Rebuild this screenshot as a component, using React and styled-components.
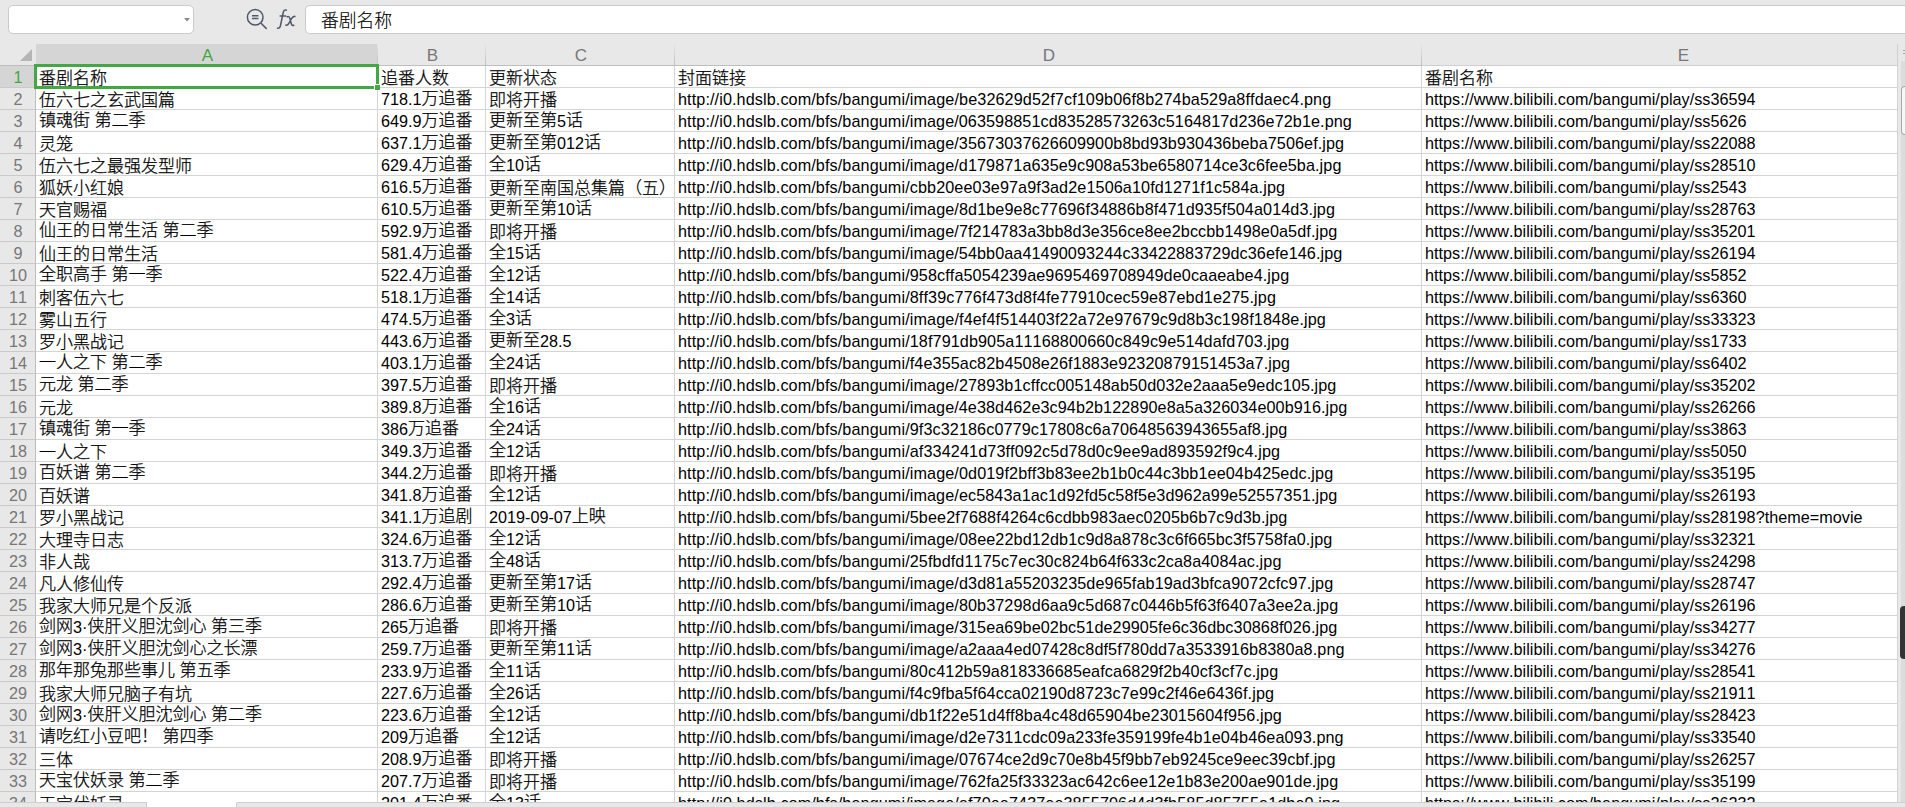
import React from "react";
import styled, { createGlobalStyle } from "styled-components";

const GRID = "#d4d4d4";
const CHROME = "#e8e8e8";
const GREEN = "#43a843";

const HEADERS = ["番剧名称", "追番人数", "更新状态", "封面链接", "番剧名称"];
const IMG = "http://i0.hdslb.com/bfs/bangumi/";
const PLAY = "https://www.bilibili.com/bangumi/play/";

const DATA = [
  ["伍六七之玄武国篇", "718.1万追番", "即将开播", "image/be32629d52f7cf109b06f8b274ba529a8ffdaec4.png", "ss36594"],
  ["镇魂街 第二季", "649.9万追番", "更新至第5话", "image/063598851cd83528573263c5164817d236e72b1e.png", "ss5626"],
  ["灵笼", "637.1万追番", "更新至第012话", "image/35673037626609900b8bd93b930436beba7506ef.jpg", "ss22088"],
  ["伍六七之最强发型师", "629.4万追番", "全10话", "image/d179871a635e9c908a53be6580714ce3c6fee5ba.jpg", "ss28510"],
  ["狐妖小红娘", "616.5万追番", "更新至南国总集篇（五）", "cbb20ee03e97a9f3ad2e1506a10fd1271f1c584a.jpg", "ss2543"],
  ["天官赐福", "610.5万追番", "更新至第10话", "image/8d1be9e8c77696f34886b8f471d935f504a014d3.jpg", "ss28763"],
  ["仙王的日常生活 第二季", "592.9万追番", "即将开播", "image/7f214783a3bb8d3e356ce8ee2bccbb1498e0a5df.jpg", "ss35201"],
  ["仙王的日常生活", "581.4万追番", "全15话", "image/54bb0aa41490093244c33422883729dc36efe146.jpg", "ss26194"],
  ["全职高手 第一季", "522.4万追番", "全12话", "958cffa5054239ae9695469708949de0caaeabe4.jpg", "ss5852"],
  ["刺客伍六七", "518.1万追番", "全14话", "8ff39c776f473d8f4fe77910cec59e87ebd1e275.jpg", "ss6360"],
  ["雾山五行", "474.5万追番", "全3话", "image/f4ef4f514403f22a72e97679c9d8b3c198f1848e.jpg", "ss33323"],
  ["罗小黑战记", "443.6万追番", "更新至28.5", "18f791db905a11168800660c849c9e514dafd703.jpg", "ss1733"],
  ["一人之下 第二季", "403.1万追番", "全24话", "f4e355ac82b4508e26f1883e92320879151453a7.jpg", "ss6402"],
  ["元龙 第二季", "397.5万追番", "即将开播", "image/27893b1cffcc005148ab50d032e2aaa5e9edc105.jpg", "ss35202"],
  ["元龙", "389.8万追番", "全16话", "image/4e38d462e3c94b2b122890e8a5a326034e00b916.jpg", "ss26266"],
  ["镇魂街 第一季", "386万追番", "全24话", "9f3c32186c0779c17808c6a70648563943655af8.jpg", "ss3863"],
  ["一人之下", "349.3万追番", "全12话", "af334241d73ff092c5d78d0c9ee9ad893592f9c4.jpg", "ss5050"],
  ["百妖谱 第二季", "344.2万追番", "即将开播", "image/0d019f2bff3b83ee2b1b0c44c3bb1ee04b425edc.jpg", "ss35195"],
  ["百妖谱", "341.8万追番", "全12话", "image/ec5843a1ac1d92fd5c58f5e3d962a99e52557351.jpg", "ss26193"],
  ["罗小黑战记", "341.1万追剧", "2019-09-07上映", "5bee2f7688f4264c6cdbb983aec0205b6b7c9d3b.jpg", "ss28198?theme=movie"],
  ["大理寺日志", "324.6万追番", "全12话", "image/08ee22bd12db1c9d8a878c3c6f665bc3f5758fa0.jpg", "ss32321"],
  ["非人哉", "313.7万追番", "全48话", "25fbdfd1175c7ec30c824b64f633c2ca8a4084ac.jpg", "ss24298"],
  ["凡人修仙传", "292.4万追番", "更新至第17话", "image/d3d81a55203235de965fab19ad3bfca9072cfc97.jpg", "ss28747"],
  ["我家大师兄是个反派", "286.6万追番", "更新至第10话", "image/80b37298d6aa9c5d687c0446b5f63f6407a3ee2a.jpg", "ss26196"],
  ["剑网3·侠肝义胆沈剑心 第三季", "265万追番", "即将开播", "image/315ea69be02bc51de29905fe6c36dbc30868f026.jpg", "ss34277"],
  ["剑网3·侠肝义胆沈剑心之长漂", "259.7万追番", "更新至第11话", "image/a2aaa4ed07428c8df5f780dd7a3533916b8380a8.png", "ss34276"],
  ["那年那兔那些事儿 第五季", "233.9万追番", "全11话", "80c412b59a818336685eafca6829f2b40cf3cf7c.jpg", "ss28541"],
  ["我家大师兄脑子有坑", "227.6万追番", "全26话", "f4c9fba5f64cca02190d8723c7e99c2f46e6436f.jpg", "ss21911"],
  ["剑网3·侠肝义胆沈剑心 第二季", "223.6万追番", "全12话", "db1f22e51d4ff8ba4c48d65904be23015604f956.jpg", "ss28423"],
  ["请吃红小豆吧！ 第四季", "209万追番", "全12话", "image/d2e7311cdc09a233fe359199fe4b1e04b46ea093.png", "ss33540"],
  ["三体", "208.9万追番", "即将开播", "image/07674ce2d9c70e8b45f9bb7eb9245ce9eec39cbf.jpg", "ss26257"],
  ["天宝伏妖录 第二季", "207.7万追番", "即将开播", "image/762fa25f33323ac642c6ee12e1b83e200ae901de.jpg", "ss35199"],
  ["天宝伏妖录", "201.4万追番", "全13话", "image/af70ee7437ee3855706d4d3fb585d85755a1dbe0.jpg", "ss26232"],
];

const ROWS = [HEADERS, ...DATA.map(([a, b, c, d, e]) => [a, b, c, IMG + d, PLAY + e])];

const Global = createGlobalStyle`
  html, body { margin: 0; background: ${CHROME}; overflow: hidden; }
  *, *::before, *::after { box-sizing: border-box; }
`;

const Window = styled.div`
  position: relative;
  width: 1905px;
  height: 807px;
  display: flex;
  flex-direction: column;
  overflow: hidden;
  background: ${CHROME};
  font-family: "Liberation Sans", "Noto Sans CJK SC", sans-serif;
  font-kerning: none;
`;

const FormulaBar = styled.div`
  height: 44px;
  flex: none;
  display: flex;
  align-items: flex-start;
  padding: 5px 0 0 8px;
`;

const NameBox = styled.div`
  width: 186px;
  height: 29px;
  display: flex;
  align-items: center;
  justify-content: flex-end;
  padding-right: 3px;
  border: 1px solid #cbcbcb;
  border-radius: 5px;
  background: #fff;
`;

const Tools = styled.div`
  width: 111px;
  height: 29px;
  flex: none;
  display: flex;
  align-items: flex-start;
  padding: 3px 0 0 52px;
  gap: 8px;
`;

const FormulaInput = styled.div`
  flex: 1;
  height: 29px;
  padding-left: 15px;
  border: 1px solid #cbcbcb;
  border-right: 0;
  border-radius: 5px 0 0 5px;
  background: #fff;
  color: #000;
  font: 300 17.8px/27px "Noto Sans CJK SC", sans-serif;
  -webkit-text-stroke: 0.15px #000;
`;

const Body = styled.div`
  flex: 1;
  min-height: 0;
  display: flex;
`;

const Sheet = styled.div`
  width: 1898px;
  flex: none;
  overflow: hidden;
`;

const Line = styled.div`
  display: grid;
  grid-template-columns: 36px 342px 108px 189px 747px 476px;
  grid-template-rows: 22px;
  height: 22px;
`;

const Corner = styled.div`
  display: flex;
  align-items: flex-end;
  justify-content: flex-end;
  padding: 0 4px 4px 0;
  border-bottom: 1px solid #bdbdbd;
`;

const ColumnHead = styled.div`
  border-right: 1px solid;
  border-image: linear-gradient(${(p) => (p.$last ? "#cfcfcf, #cfcfcf" : `${CHROME}, #bdbdbd`)}) 1;
  border-bottom: 1px solid #bdbdbd;
  padding-left: ${(p) => (p.$last ? 48 : 2)}px;
  background: ${(p) => (p.$active ? "#d5d5d5" : CHROME)};
  color: ${(p) => (p.$active ? GREEN : "#777")};
  font-size: 17px;
  line-height: 23px;
  text-align: center;
`;

const RowHead = styled.div`
  padding: 1px 0 0 1px;
  border-right: 1px solid #bdbdbd;
  border-bottom: 1px solid #cacaca;
  background: ${(p) => (p.$active ? "#d5d5d5" : CHROME)};
  color: ${(p) => (p.$active ? GREEN : "#777")};
  font-size: 16.2px;
  line-height: 21px;
  text-align: center;
`;

const Cell = styled.div`
  position: relative;
  padding: ${(p) => (p.$low ? 2 : 1)}px 0 0 3px;
  border-right: 1px solid ${GRID};
  border-bottom: 1px solid ${GRID};
  background: #fff;
  color: #000;
  font-size: 16.2px;
  line-height: 21px;
  white-space: pre;
`;

const Han = styled.span`
  font: 300 17px/12px "Noto Sans CJK SC", sans-serif;
  vertical-align: ${(p) => (p.$raised ? 1 : 0)}px;
  -webkit-text-stroke: 0.25px #000;
`;

const Latin = styled.span`
  letter-spacing: ${(p) => p.$spacing || 0}px;
`;

const Selection = styled.div`
  position: absolute;
  z-index: 1;
  top: -2px;
  left: -2px;
  width: 345px;
  height: 25px;
  border: 3px solid ${GREEN};
`;

const FillHandle = styled.div`
  position: absolute;
  z-index: 2;
  right: -3px;
  bottom: -3px;
  width: 6px;
  height: 6px;
  border: 1px solid #fff;
  border-width: 1px 0 0 1px;
  background: ${GREEN};
`;

const ScrollColumn = styled.div`
  flex: 1;
  display: flex;
  flex-direction: column;
  align-items: flex-end;
`;

const SplitGrip = styled.div`
  width: 2px;
  height: 4px;
  margin-top: 6px;
  border: 1px solid #aaa;
  border-width: 1px 0;
`;

const Track = styled.div`
  width: 4px;
  flex: 1;
  margin-top: 7px;
  padding-top: 25px;
  background: #dcdcdc;
`;

const Thumb = styled.div`
  width: 4px;
  height: 49px;
  border: 1px solid #a8a8a8;
  border-right: 0;
  border-radius: 4px 0 0 4px;
  background: #f7f7f7;
`;

const SideHandle = styled.div`
  position: absolute;
  top: 606px;
  right: 0;
  width: 5px;
  height: 53px;
  border-radius: 4px 0 0 4px;
  background: #333;
`;

const TabBar = styled.div`
  height: 5px;
  flex: none;
  display: flex;
`;

const TabSpace = styled.div`
  width: ${(p) => p.$width};
  flex: ${(p) => (p.$grow ? 1 : "none")};
  border-top: 1px solid ${(p) => (p.$active ? "#fff" : "#cfcfcf")};
  border-right: ${(p) => (p.$edge ? "1px solid #cfcfcf" : "0")};
  background: ${(p) => (p.$active ? "#fff" : CHROME)};
`;

const hasLatin = (text) => /[\x20-\x7e]/.test(text);

/* The narrow "f" gets a little extra room, spread over the file name. */
function CellText({ text }) {
  if (text.startsWith(IMG)) {
    const file = text.slice(IMG.length);
    const narrow = (file.match(/f/g) || []).length;
    return (
      <>
        <Latin $spacing={0.1}>{IMG}</Latin>
        <Latin $spacing={(narrow * 0.4) / file.length + 0.075}>{file}</Latin>
      </>
    );
  }
  if (text.startsWith(PLAY)) return <Latin $spacing={0.03}>{text}</Latin>;
  const runs = text.match(/[\x20-\x7e·]+|[^\x20-\x7e·]+/g) || [];
  const raised = hasLatin(text);
  return runs.map((run, i) =>
    /[\x20-\x7e·]/.test(run) ? (
      <Latin key={i}>{run}</Latin>
    ) : (
      <Han key={i} $raised={raised}>{run}</Han>
    )
  );
}

function SearchIcon() {
  return (
    <svg width="22" height="22" viewBox="0 0 22 22" fill="none" stroke="#4f586a" strokeWidth="1.5">
      <circle cx="9.2" cy="9.3" r="7.8" />
      <path d="M14.800 15 20.700 20.900M6 7.800h6.400M6 10.500h6.400" />
    </svg>
  );
}

function FxIcon() {
  return (
    <svg width="21" height="22" viewBox="0 0 21 22" fill="none" stroke="#4f586a" strokeWidth="1.5">
      <path d="M11 2.4C8.500 1.300 7.600 2.700 7.100 5L4.500 17.500C4 20 2.700 20.800 1 20M3.600 8h6.500" />
      <path d="M10.500 9c1.800-1 2.800-.5 3.300 1.200l1.500 5.500c.5 1.800 1.500 2.200 3 1.300M19.500 8.600c-1.700-.7-2.900.2-4 2l-2.500 4.500c-.9 1.700-2.100 2.500-3.700 1.900" />
    </svg>
  );
}

export default function App() {
  return (
    <>
      <Global />
      <Window>
        <FormulaBar>
          <NameBox>
            <svg width="6" height="4" viewBox="0 0 6 4"><path d="M0 0h6L3 3.500z" fill="#8a8a8a" /></svg>
          </NameBox>
          <Tools>
            <SearchIcon />
            <FxIcon />
          </Tools>
          <FormulaInput>番剧名称</FormulaInput>
        </FormulaBar>
        <Body>
          <Sheet>
            <Line>
              <Corner>
                <svg width="12" height="12"><path d="M12 0V12H0z" fill="#b5b5b5" /></svg>
              </Corner>
              {["A", "B", "C", "D", "E"].map((c, i) => (
                <ColumnHead key={c} $active={i === 0} $last={i === 4}>{c}</ColumnHead>
              ))}
            </Line>
            {ROWS.map((row, r) => (
              <Line key={r}>
                <RowHead $active={r === 0}>{r + 1}</RowHead>
                {row.map((text, c) => (
                  <Cell key={c} $low={!hasLatin(text)}>
                    <CellText text={text} />
                    {r === 0 && c === 0 && (
                      <>
                        <Selection />
                        <FillHandle />
                      </>
                    )}
                  </Cell>
                ))}
              </Line>
            ))}
          </Sheet>
          <ScrollColumn>
            <SplitGrip />
            <Track>
              <Thumb />
            </Track>
          </ScrollColumn>
        </Body>
        <TabBar>
          <TabSpace $width="147px" $edge />
          <TabSpace $width="90px" $active $edge />
          <TabSpace $grow />
        </TabBar>
        <SideHandle />
      </Window>
    </>
  );
}
